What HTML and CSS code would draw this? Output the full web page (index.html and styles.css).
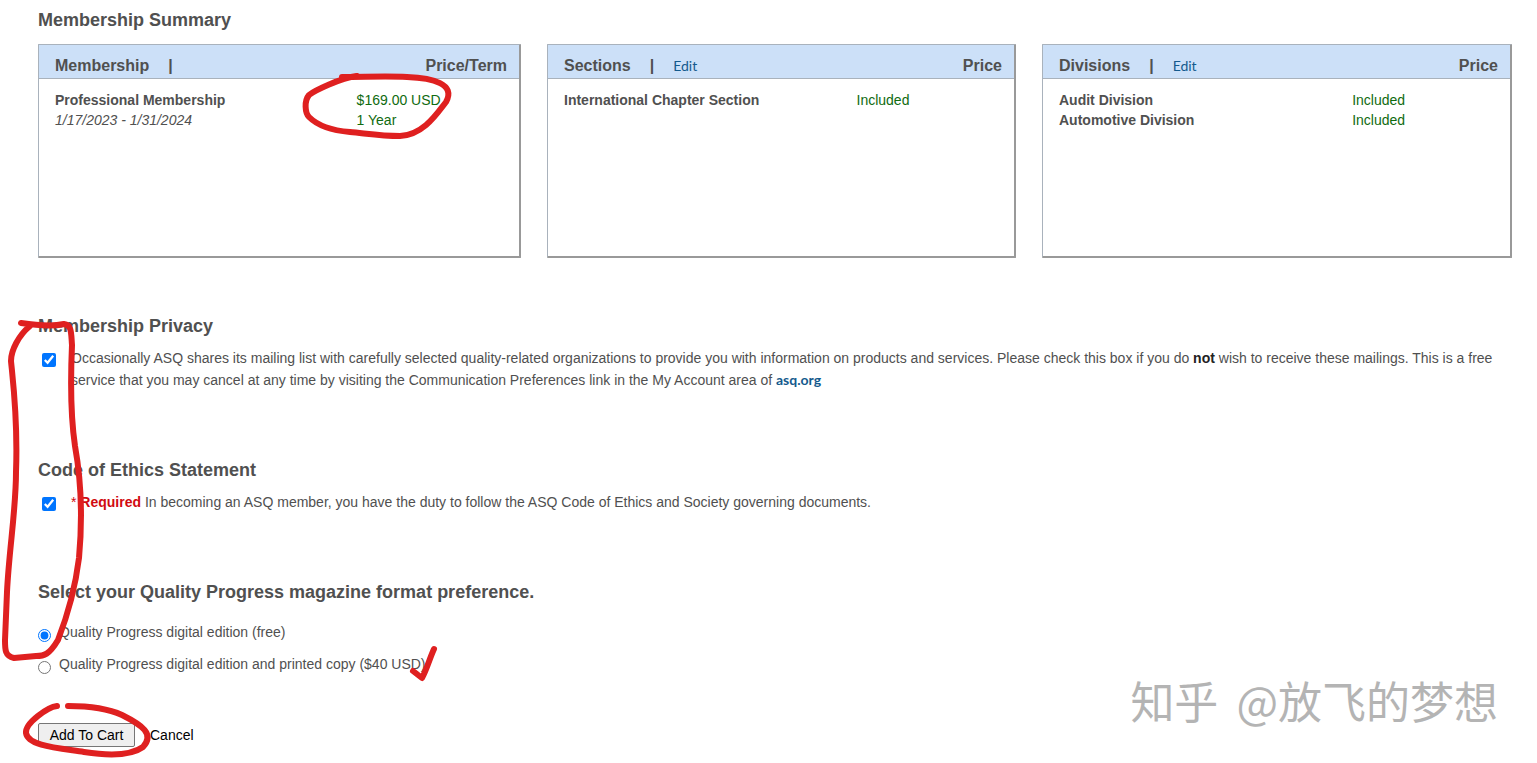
FILE: index.html
```html
<!DOCTYPE html>
<html lang="en">
<head>
    <meta charset="UTF-8">
    <meta name="viewport" content="width=device-width, initial-scale=1.0">
    <title>Membership Summary</title>
    <link rel="stylesheet" href="styles.css">
</head>
<body>
    <main class="page">
        <h2>Membership Summary</h2>
        <div class="cards">
            <section class="card">
                <header class="card-head">
                    <h3>Membership</h3>
                    <span class="bar">|</span>
                    <span class="price-head">Price/Term</span>
                </header>
                <div class="card-row">
                    <div><b>Professional Membership</b><br><i>1/17/2023 - 1/31/2024</i></div>
                    <div class="price">$169.00 USD /<br>1 Year</div>
                </div>
            </section>
            <section class="card">
                <header class="card-head">
                    <h3>Sections</h3>
                    <span class="bar">|</span>
                    <a href="#sections" class="edit">Edit</a>
                    <span class="price-head">Price</span>
                </header>
                <div class="card-row">
                    <b>International Chapter Section</b>
                    <div class="price">Included</div>
                </div>
            </section>
            <section class="card">
                <header class="card-head">
                    <h3>Divisions</h3>
                    <span class="bar">|</span>
                    <a href="#divisions" class="edit">Edit</a>
                    <span class="price-head">Price</span>
                </header>
                <div class="card-row">
                    <b>Audit Division</b>
                    <div class="price">Included</div>
                </div>
                <div class="card-row">
                    <b>Automotive Division</b>
                    <div class="price">Included</div>
                </div>
            </section>
        </div>

        <form>
            <section class="privacy">
                <h2>Membership Privacy</h2>
                <div class="check">
                    <input type="checkbox" id="privacy" checked>
                    <label for="privacy">Occasionally ASQ shares its mailing list with carefully selected quality-related organizations to provide you with information on products and services. Please check this box if you do <b class="not">not</b> wish to receive these mailings. This is a free service that you may cancel at any time by visiting the Communication Preferences link in the My Account area of <a href="#asq" class="site">asq.org</a></label>
                </div>
            </section>
            <section class="ethics">
                <h2>Code of Ethics Statement</h2>
                <div class="check">
                    <input type="checkbox" id="ethics" checked>
                    <label for="ethics"><span class="required">* <b>Required</b></span> In becoming an ASQ member, you have the duty to follow the ASQ Code of Ethics and Society governing documents.</label>
                </div>
            </section>
            <section class="format">
                <h2>Select your Quality Progress magazine format preference.</h2>
                <div class="radio">
                    <input type="radio" name="format" id="digital" checked>
                    <label for="digital">Quality Progress digital edition (free)</label>
                </div>
                <div class="radio">
                    <input type="radio" name="format" id="printed">
                    <label for="printed">Quality Progress digital edition and printed copy ($40 USD)</label>
                </div>
            </section>
            <div class="actions">
                <button type="submit" class="add">Add To Cart</button>
                <button type="button" class="cancel">Cancel</button>
            </div>
        </form>

        <!-- red pen marks -->
        <svg class="marks" width="540" height="763" viewBox="0 0 540 763" aria-hidden="true">
            <path d="M357 76C340 78 314 91 309 95C304 101 305 113 309 117C320 128 338 131 350 132C370 134 382 136 400 136C424 135 438 112 446 102C456 84 433 78 407 77C387 76 365 77 342 77"/>
            <path d="M21 323C34 325 51 327 64 324C72 325 71 333 72 345C70 390 71 419 75 446C82 485 82 525 79 558C75 590 65 622 58 640C49 655 44 656 36 656L14 658C5 656 5 650 5 640L7 592C9 550 16 510 16 472C18 419 13 382 11 361C11 350 19 335 30 326"/>
            <path d="M413 671L422 678C427 669 429 660 434 649"/>
            <path d="M57 706C48 707 25 723 26 733C28 746 58 748 84 752C110 756 132 755 143 747C155 734 142 725 122 715C107 708 85 706 68 706"/>
        </svg>
        <div class="watermark" lang="zh-CN"><span>知乎</span><span>@放飞的梦想</span></div>
    </main>
</body>
</html>
```
FILE: styles.css
```css
* {
    box-sizing: border-box;
}
body {
    margin: 0;
    background: #fff;
    color: #505050;
    font-family: "Liberation Sans", Arial, sans-serif;
    font-size: 14px;
    line-height: 21px;
}
.page {
    position: relative;
    padding: 10px 25px 15px 38px;
}
h2 {
    margin: 0;
    font-size: 18px;
    line-height: 20px;
}
h3 {
    margin: 0;
    font-size: 16px;
}
.cards {
    display: grid;
    grid-template-columns: 483fr 469fr 470fr;
    gap: 26px;
    margin-top: 14px;
}
.card {
    min-height: 214px;
    border: 1px solid #a9b2bc;
    border-right: 2px solid #999;
    border-bottom: 2px solid #999;
    border-radius: 1px;
}
.card-head {
    display: flex;
    align-items: center;
    height: 34px;
    margin-bottom: 11px;
    padding: 8px 12px 0 16px;
    background: #cce0f8;
    border-bottom: 1px solid #a9b2bc;
    font-size: 16px;
    font-weight: bold;
}
.bar {
    margin: 0 19px;
}
.price-head {
    margin-left: auto;
}
.card-row {
    display: grid;
    grid-template-columns: 65% 1fr;
    padding-left: 16px;
    line-height: 20px;
}
.price {
    color: #106b10;
}
a {
    color: #145a8d;
    text-decoration: none;
}
.edit {
    font-family: Lato, sans-serif;
    font-size: 14px;
    font-weight: normal;
}
.site {
    font-family: Lato, sans-serif;
    font-weight: bold;
}
.not {
    color: #222;
}
.privacy {
    margin-top: 58px;
}
.ethics,
.format {
    margin-top: 69px;
}
.check {
    display: flex;
    align-items: flex-start;
    gap: 15px;
    margin-top: 12px;
    padding: 0 15px 0 4px;
}
.check input {
    flex: none;
    width: 14px;
    height: 14px;
    margin: 5px 0 0;
}
.required {
    color: #d10a10;
}
.radio {
    display: flex;
    gap: 8px;
    margin-top: 11px;
}
h2 + .radio {
    margin-top: 20px;
}
.radio input {
    width: 13px;
    height: 13px;
    margin: 7px 0 0;
}
.actions {
    display: flex;
    align-items: center;
    gap: 15px;
    margin-top: 48px;
}
button {
    padding: 0;
    font-family: inherit;
    font-size: 14px;
    color: #000;
}
.add {
    width: 97px;
    height: 24px;
    background: #efefef;
    border: 1px solid #767676;
    border-radius: 2px;
}
.cancel {
    background: none;
    border: none;
}
.marks {
    position: absolute;
    top: 0;
    left: 0;
    fill: none;
    stroke: #df2020;
    stroke-width: 6;
    stroke-linecap: round;
    stroke-linejoin: round;
    pointer-events: none;
}
.watermark {
    position: absolute;
    right: 39px;
    bottom: 34px;
    display: flex;
    gap: 18px;
    color: #b4b4b4;
    font-family: "Noto Sans CJK SC", sans-serif;
    font-size: 44px;
    line-height: 56px;
}
```
